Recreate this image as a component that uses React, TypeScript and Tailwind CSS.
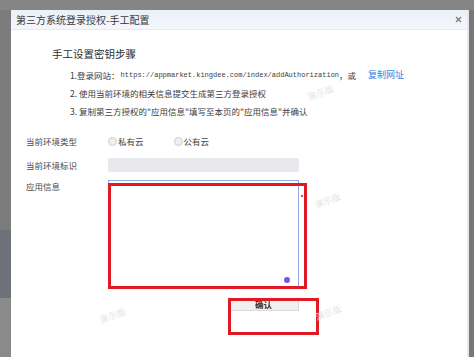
import React from 'react'

const cjk = { fontFamily: '"Noto Sans CJK SC", "Noto Sans", sans-serif' }
const mono = { fontFamily: '"Liberation Mono", "DejaVu Sans Mono", monospace' }

function Watermark({ className }: { className: string }) {
  return (
    <span
      className={`pointer-events-none absolute -rotate-[20deg] text-[9px] leading-none text-[#e4e4e4] ${className}`}
      style={cjk}
    >
      演示版
    </span>
  )
}

function Radio({ label }: { label: string }) {
  return (
    <div className="flex items-center gap-[1px]">
      <span className="h-[9px] w-[9px] rounded-full border border-[#cfcfcf] bg-[#eeeeee]" />
      <span className="text-[8.5px] text-[#444]">{label}</span>
    </div>
  )
}

export default function App() {
  return (
    <div className="flex h-[357px] w-[474px] flex-col overflow-hidden bg-[#858585]" style={cjk}>
      <div className="h-[10px] shrink-0" />
      <div className="flex flex-1">
        {/* left shade */}
        <div className="flex w-[11px] shrink-0 flex-col">
          <div className="h-[220px] bg-[#7c7c7c]" />
          <div className="h-[68px] bg-[#6f717a]" />
          <div className="flex-1 bg-[#8a8a8a]" />
        </div>

        {/* dialog */}
        <div className="relative flex w-[458px] shrink-0 flex-col border-r-2 border-[#e8e8e8] bg-white">
          <div className="flex h-[20px] shrink-0 items-center justify-between border-b border-[#e6e9f0] bg-gradient-to-b from-[#ebeff8] to-[#f5f7fc] pl-[5px] pr-[4px]">
            <span className="text-[10px] leading-none text-[#3c3c3c]">第三方系统登录授权-手工配置</span>
            <svg width="7" height="7" viewBox="0 0 7 7" className="mr-[1px]">
              <path d="M1 1L6 6M6 1L1 6" stroke="#7a7a7a" strokeWidth="1.2" />
            </svg>
          </div>

          <div className="pl-[41px] pt-[17px]">
            <h2 className="text-[10.5px] leading-[14px] text-[#2e2e2e]">手工设置密钥步骤</h2>
            <ol className="mt-[5px] pl-[18px] text-[8.5px] leading-[18px] text-[#3c3c3c]">
              <li className="flex items-center whitespace-nowrap">
                <span>1.登录网站：</span>
                <span className="ml-[1px] text-[7px]" style={mono}>
                  https://appmarket.kingdee.com/index/addAuthorization
                </span>
                <span>，或</span>
                <span className="ml-[12px] text-[9px] text-[#3b7fd6]">复制网址</span>
              </li>
              <li>2. 使用当前环境的相关信息提交生成第三方登录授权</li>
              <li>3. 复制第三方授权的"应用信息"填写至本页的"应用信息"并确认</li>
            </ol>
          </div>

          <div className="relative mt-[14px] pl-[15px] text-[8.5px] text-[#4a4a4a]">
            <div className="flex h-[14px] items-center">
              <span className="w-[82px] shrink-0">当前环境类型</span>
              <div className="flex items-center gap-[30px]">
                <Radio label="私有云" />
                <Radio label="公有云" />
              </div>
            </div>

            <div className="mt-[10px] flex h-[14px] items-center">
              <span className="w-[82px] shrink-0">当前环境标识</span>
              <div className="h-[14px] w-[191px] rounded-[2px] bg-[#e8e9ec]" />
            </div>

            <div className="mt-[8px] flex items-start">
              <span className="w-[82px] shrink-0 leading-[12px]">应用信息</span>
              <div className="relative h-[107px] w-[191px] border border-[#93a9e6] bg-white">
                <span className="absolute bottom-[3px] right-[8px] h-[6px] w-[6px] rounded-full bg-[#7a55dd]" />
                {/* annotation box */}
                <div className="absolute -left-[1px] top-[2px] h-[106px] w-[199px] border-[3px] border-[#e01a22]" />
                <span className="absolute right-[-5px] top-[14px] h-[2px] w-[2px] bg-[#e0464c]" />
              </div>
            </div>

            <div className="mt-[11px] flex pl-[202px]">
              <div className="relative">
                <button className="flex h-[13px] w-[71px] items-center justify-center border border-[#dadada] bg-[#f0f0f0] text-[8.5px] font-bold leading-none text-[#333]">
                  确认
                </button>
                <div className="absolute left-0 top-0 h-[37px] w-[91px] border-[3px] border-[#e01a22]" />
              </div>
            </div>
          </div>

          <Watermark className="left-[296px] top-[78px]" />
          <Watermark className="left-[303px] top-[186px]" />
          <Watermark className="left-[88px] top-[301px]" />
          <Watermark className="left-[304px] top-[298px]" />
        </div>

        <div className="flex-1 bg-[#787878]" />
      </div>
    </div>
  )
}
